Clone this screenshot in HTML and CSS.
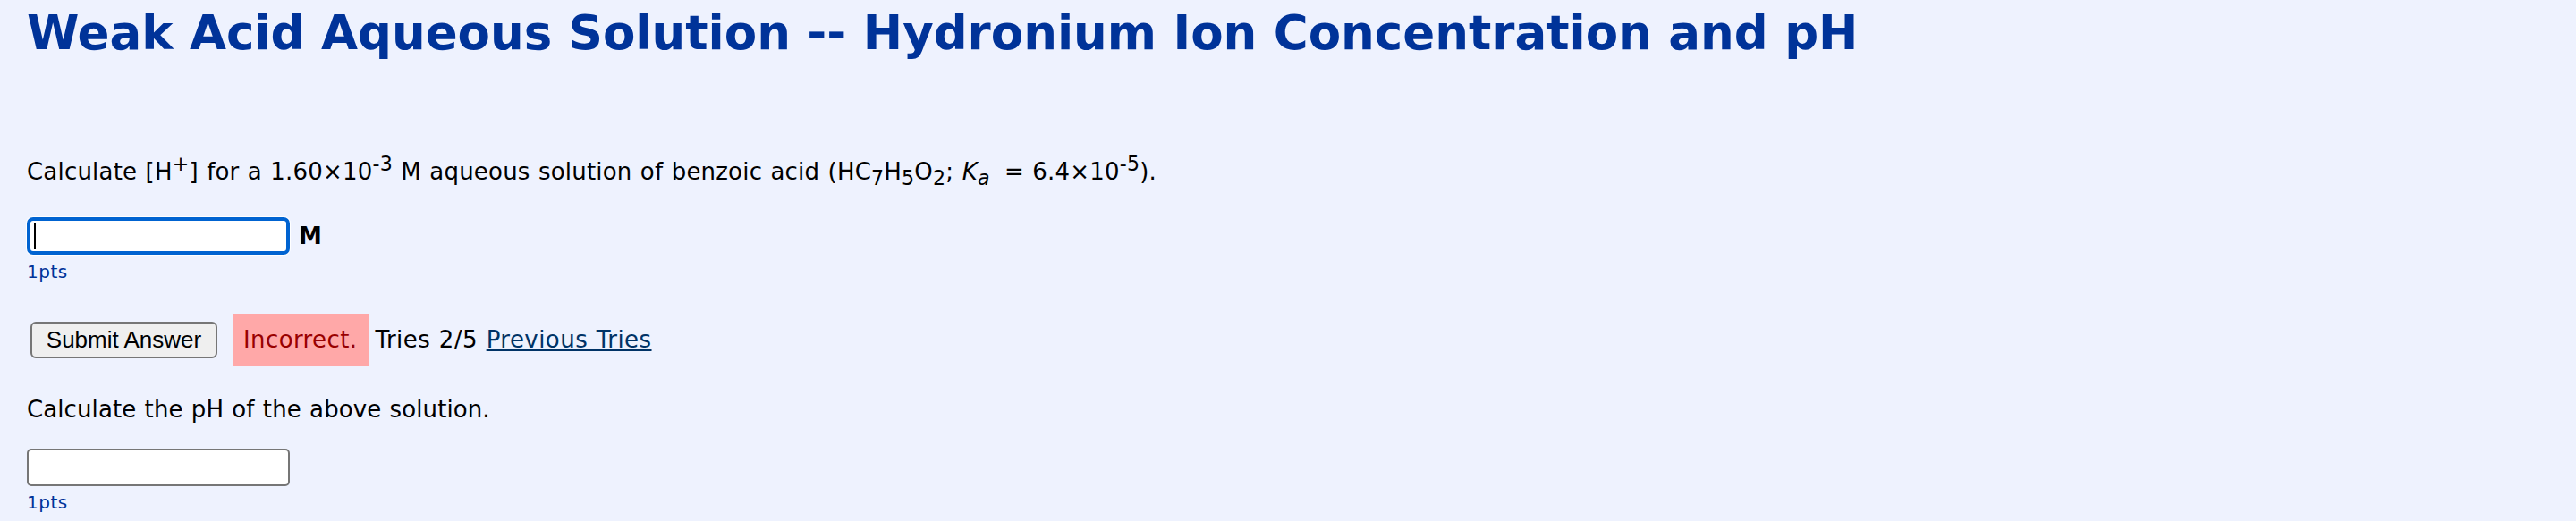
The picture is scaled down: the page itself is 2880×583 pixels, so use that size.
FILE: index.html
```html
<!DOCTYPE html>
<html lang="en">
<head>
<meta charset="utf-8">
<title>Weak Acid Aqueous Solution</title>
<link rel="stylesheet" href="styles.css">
</head>
<body>
<h1 class="title">Weak Acid Aqueous Solution -- Hydronium Ion Concentration and pH</h1>

<p class="question q1">Calculate [H<sup>+</sup>] for a 1.60×10<sup>-3</sup> M aqueous solution of benzoic acid (HC<sub>7</sub>H<sub>5</sub>O<sub>2</sub>; <i class="ka">K<sub>a</sub></i> = 6.4×10<sup>-5</sup>).</p>

<div class="answer-row">
  <div class="field focused"><span class="caret"></span></div>
  <span class="unit">M</span>
</div>
<div class="pts">1pts</div>

<div class="submit-row">
  <button class="submit" type="button">Submit Answer</button>
  <span class="incorrect">Incorrect.</span>
  <span class="tries">Tries 2/5 <a class="prev" href="#">Previous Tries</a></span>
</div>

<p class="question q2">Calculate the pH of the above solution.</p>

<div class="answer-row row2">
  <div class="field"></div>
</div>
<div class="pts">1pts</div>
</body>
</html>
```

FILE: styles.css
```css
html, body {
  margin: 0;
  padding: 0;
  background: #eef2fe;
}
body {
  padding-left: 30px;
  font-family: "DejaVu Sans", Verdana, sans-serif;
  color: #000;
}
.title {
  margin: 7px 0 0;
  font-size: 53px;
  line-height: 60px;
  font-weight: bold;
  color: #003399;
  white-space: nowrap;
}
.question {
  margin: 0;
  font-size: 26px;
  line-height: 30px;
  letter-spacing: 0.2px;
  word-spacing: 0.9px;
  white-space: nowrap;
}
.q1 {
  margin-top: 110px;
}
.ka {
  margin-right: 7px;
}
.q2 {
  margin-top: 33px;
  letter-spacing: 0.1px;
}
sup, sub {
  font-size: 0.85em;
  line-height: 0;
}
.answer-row {
  display: flex;
  align-items: center;
  gap: 10px;
  margin-top: 36px;
}
.row2 {
  margin-top: 29px;
}
.field {
  box-sizing: border-box;
  width: 294px;
  height: 42px;
  background: #fff;
  border: 2px solid #767676;
  border-radius: 5px;
  display: flex;
  align-items: center;
  padding-left: 5px;
}
.field.focused {
  border: 4px solid #0063d1;
  border-radius: 7px;
  box-shadow: 0 0 0 1px #fff;
  padding-left: 4px;
}
.caret {
  display: block;
  width: 2px;
  height: 29px;
  background: #000;
}
.unit {
  font-size: 26px;
  font-weight: bold;
  line-height: 30px;
}
.pts {
  margin-top: 7px;
  font-size: 20px;
  line-height: 24px;
  letter-spacing: 0.5px;
  color: #003399;
}
.row2 + .pts {
  margin-top: 6px;
}
.submit-row {
  display: flex;
  align-items: center;
  margin-top: 35px;
}
.submit {
  box-sizing: border-box;
  margin: 0 17px 0 4px;
  width: 209px;
  height: 41px;
  padding: 0;
  font-family: "Liberation Sans", Arial, sans-serif;
  font-size: 26px;
  color: #000;
  background: #efefef;
  border: 2px solid #767676;
  border-radius: 6px;
}
.incorrect {
  display: block;
  padding: 14px 14px 14px 12px;
  font-size: 26px;
  line-height: 31px;
  letter-spacing: 0.4px;
  color: #990000;
  background: #ffa8a8;
}
.tries {
  margin-left: 6px;
  font-size: 26px;
  line-height: 31px;
  letter-spacing: 0.45px;
  word-spacing: 0.9px;
  white-space: nowrap;
}
.prev {
  color: #003366;
  text-decoration: underline;
}
```
